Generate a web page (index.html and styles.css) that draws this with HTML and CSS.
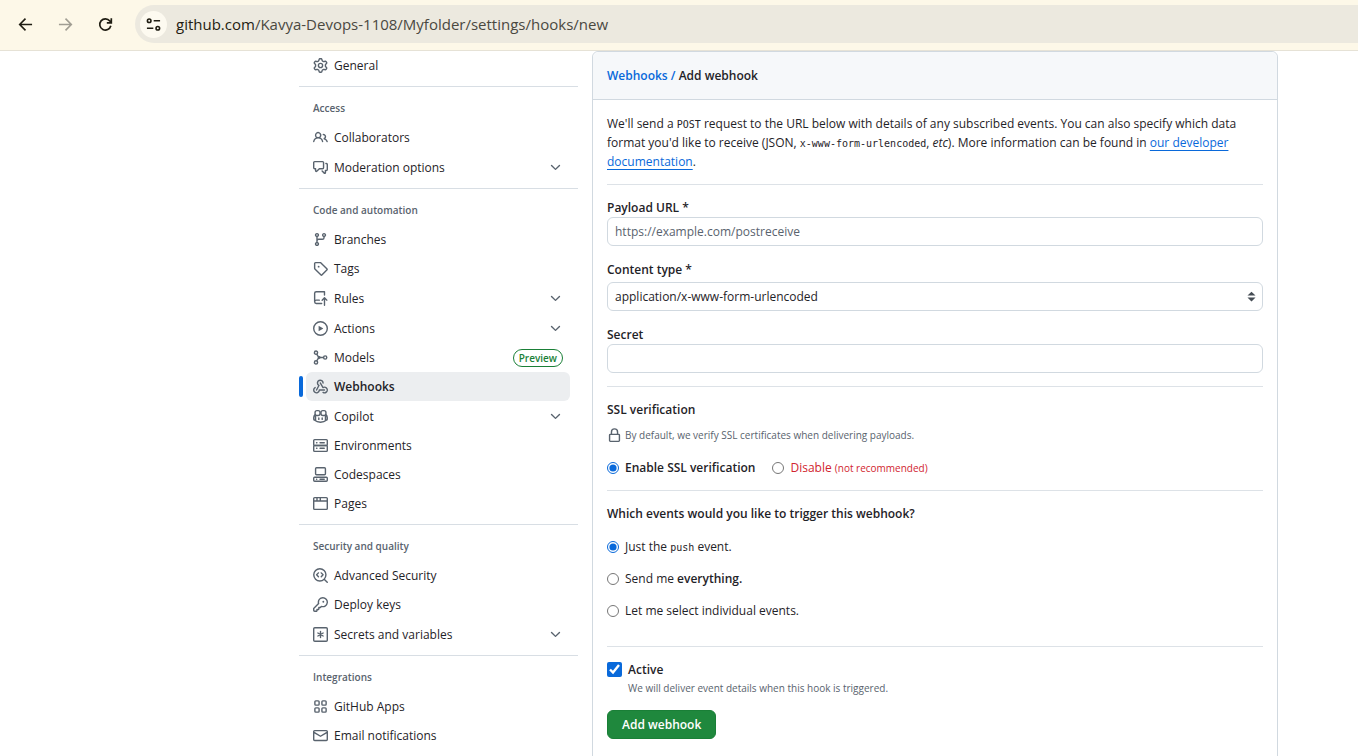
FILE: index.html
```html
<!DOCTYPE html>
<html lang="en">
<head>
    <meta charset="UTF-8">
    <meta name="viewport" content="width=device-width, initial-scale=1.0">
    <title>Add webhook</title>
    <link rel="stylesheet" href="styles.css">
</head>
<body>

    <!-- Icon sprite -->
    <svg class="sprite" aria-hidden="true">
        <symbol id="i-gear" viewBox="0 0 16 16"><path d="M8 0a8.2 8.2 0 0 1 .701.031C9.444.095 9.99.645 10.16 1.29l.288 1.107c.018.066.079.158.212.224.231.114.454.243.668.386.123.082.233.09.299.071l1.103-.303c.644-.176 1.392.021 1.82.63.27.385.506.792.704 1.218.315.675.111 1.422-.364 1.891l-.814.806c-.049.048-.098.147-.088.294.016.257.016.515 0 .772-.01.147.038.246.088.294l.814.806c.475.469.679 1.216.364 1.891a7.977 7.977 0 0 1-.704 1.217c-.428.61-1.176.807-1.82.63l-1.102-.302c-.067-.019-.177-.011-.3.071a5.909 5.909 0 0 1-.668.386c-.133.066-.194.158-.211.224l-.29 1.106c-.168.646-.715 1.196-1.458 1.26a8.006 8.006 0 0 1-1.402 0c-.743-.064-1.289-.614-1.458-1.26l-.289-1.106c-.018-.066-.079-.158-.212-.224a5.738 5.738 0 0 1-.668-.386c-.123-.082-.233-.09-.299-.071l-1.103.303c-.644.176-1.392-.021-1.82-.63a8.12 8.12 0 0 1-.704-1.218c-.315-.675-.111-1.422.363-1.891l.815-.806c.05-.048.098-.147.088-.294a6.214 6.214 0 0 1 0-.772c.01-.147-.038-.246-.088-.294l-.815-.806C.635 6.045.431 5.298.746 4.623a7.92 7.92 0 0 1 .704-1.217c.428-.61 1.176-.807 1.82-.63l1.102.302c.067.019.177.011.3-.071.214-.143.437-.272.668-.386.133-.066.194-.158.211-.224l.29-1.106C6.009.645 6.556.095 7.299.03 7.53.01 7.764 0 8 0Zm-.571 1.525c-.036.003-.108.036-.137.146l-.289 1.105c-.147.561-.549.967-.998 1.189-.173.086-.34.183-.5.29-.417.278-.97.423-1.529.27l-1.103-.303c-.109-.03-.175.016-.195.045-.22.312-.412.644-.573.99-.014.031-.021.11.059.19l.815.806c.411.406.562.957.53 1.456a4.709 4.709 0 0 0 0 .582c.032.499-.119 1.05-.53 1.456l-.815.806c-.081.08-.073.159-.059.19.162.346.353.677.573.989.02.03.085.076.195.046l1.102-.303c.56-.153 1.113-.008 1.53.27.161.107.328.204.501.29.447.222.85.629.997 1.189l.289 1.105c.029.109.101.143.137.146a6.6 6.6 0 0 0 1.142 0c.036-.003.108-.036.137-.146l.289-1.105c.147-.561.549-.967.998-1.189.173-.086.34-.183.5-.29.417-.278.97-.423 1.529-.27l1.103.303c.109.029.175-.016.195-.045.22-.313.411-.644.573-.99.014-.031.021-.11-.059-.19l-.815-.806c-.411-.406-.562-.957-.53-1.456a4.709 4.709 0 0 0 0-.582c-.032-.499.119-1.05.53-1.456l.815-.806c.081-.08.073-.159.059-.19a6.464 6.464 0 0 0-.573-.989c-.02-.03-.085-.076-.195-.046l-1.102.303c-.56.153-1.113.008-1.53-.27a4.44 4.44 0 0 0-.501-.29c-.447-.222-.85-.629-.997-1.189l-.289-1.105c-.029-.11-.101-.143-.137-.146a6.6 6.6 0 0 0-1.142 0ZM11 8a3 3 0 1 1-6 0 3 3 0 0 1 6 0ZM9.5 8a1.5 1.5 0 1 0-3.001.001A1.5 1.5 0 0 0 9.5 8Z"/></symbol>
        <symbol id="i-people" viewBox="0 0 16 16"><path d="M2 5.5a3.5 3.5 0 1 1 5.898 2.549 5.508 5.508 0 0 1 3.034 4.084.75.75 0 1 1-1.482.235 4 4 0 0 0-7.9 0 .75.75 0 0 1-1.482-.236A5.507 5.507 0 0 1 3.102 8.05 3.493 3.493 0 0 1 2 5.5ZM11 4a3.001 3.001 0 0 1 2.22 5.018 5.01 5.01 0 0 1 2.56 3.012.749.749 0 0 1-.885.954.752.752 0 0 1-.549-.514 3.507 3.507 0 0 0-2.522-2.372.75.75 0 0 1-.574-.73v-.352a.75.75 0 0 1 .416-.672A1.5 1.5 0 0 0 11 5.5.75.75 0 0 1 11 4Zm-5.5-.5a2 2 0 1 0-.001 3.999A2 2 0 0 0 5.5 3.5Z"/></symbol>
        <symbol id="i-discussion" viewBox="0 0 16 16"><path d="M1.75 1h8.5c.966 0 1.75.784 1.75 1.75v5.5A1.75 1.75 0 0 1 10.25 10H7.061l-2.574 2.573A1.458 1.458 0 0 1 2 11.543V10h-.25A1.75 1.75 0 0 1 0 8.25v-5.5C0 1.784.784 1 1.75 1ZM1.5 2.75v5.5c0 .138.112.25.25.25h1a.75.75 0 0 1 .75.75v2.19l2.72-2.72a.749.749 0 0 1 .53-.22h3.5a.25.25 0 0 0 .25-.25v-5.5a.25.25 0 0 0-.25-.25h-8.5a.25.25 0 0 0-.25.25Zm13 2a.25.25 0 0 0-.25-.25h-.5a.75.75 0 0 1 0-1.5h.5c.966 0 1.75.784 1.75 1.75v5.5A1.75 1.75 0 0 1 14.25 12H14v1.543a1.458 1.458 0 0 1-2.487 1.03L9.22 12.28a.749.749 0 0 1 .326-1.275.749.749 0 0 1 .734.215l2.22 2.22v-2.19a.75.75 0 0 1 .75-.75h1a.25.25 0 0 0 .25-.25Z"/></symbol>
        <symbol id="i-branch" viewBox="0 0 16 16"><path d="M9.5 3.25a2.25 2.25 0 1 1 3 2.122V6A2.5 2.5 0 0 1 10 8.5H6a1 1 0 0 0-1 1v1.128a2.251 2.251 0 1 1-1.5 0V5.372a2.25 2.25 0 1 1 1.5 0v1.836A2.493 2.493 0 0 1 6 7h4a1 1 0 0 0 1-1v-.628A2.25 2.25 0 0 1 9.5 3.25Zm-6 0a.75.75 0 1 0 1.5 0 .75.75 0 0 0-1.5 0Zm8.25-.75a.75.75 0 1 0 0 1.5.75.75 0 0 0 0-1.5ZM4.25 12a.75.75 0 1 0 0 1.5.75.75 0 0 0 0-1.5Z"/></symbol>
        <symbol id="i-tag" viewBox="0 0 16 16"><path d="M1 7.775V2.75C1 1.784 1.784 1 2.75 1h5.025c.464 0 .91.184 1.238.513l6.25 6.25a1.75 1.75 0 0 1 0 2.474l-5.026 5.026a1.75 1.75 0 0 1-2.474 0l-6.25-6.25A1.752 1.752 0 0 1 1 7.775Zm1.5 0c0 .066.026.13.073.177l6.25 6.25a.25.25 0 0 0 .354 0l5.025-5.025a.25.25 0 0 0 0-.354l-6.25-6.25a.25.25 0 0 0-.177-.073H2.75a.25.25 0 0 0-.25.25ZM6 5a1 1 0 1 1 0 2 1 1 0 0 1 0-2Z"/></symbol>
        <symbol id="i-rules" viewBox="0 0 16 16"><path d="M1 2.5A2.5 2.5 0 0 1 3.5 0h8.75a.75.75 0 0 1 .75.75v3.5a.75.75 0 0 1-1.5 0V1.5h-8a1 1 0 0 0-1 1v6.708A2.493 2.493 0 0 1 3.5 9h3.25a.75.75 0 0 1 0 1.5H3.5a1 1 0 0 0 0 2h5.75a.75.75 0 0 1 0 1.5H3.5A2.5 2.5 0 0 1 1 11.5Zm13.23 7.79-1.225-1.224v6.184a.75.75 0 0 1-1.5 0V9.066L10.28 10.29a.75.75 0 0 1-1.06-1.061l2.505-2.504a.75.75 0 0 1 1.06 0L15.29 9.23a.751.751 0 0 1-.018 1.042.751.751 0 0 1-1.042.018Z"/></symbol>
        <symbol id="i-play" viewBox="0 0 16 16"><path d="M8 0a8 8 0 1 1 0 16A8 8 0 0 1 8 0ZM1.5 8a6.5 6.5 0 1 0 13 0 6.5 6.5 0 0 0-13 0Zm4.879-2.773 4.264 2.559a.25.25 0 0 1 0 .428l-4.264 2.559A.25.25 0 0 1 6 10.559V5.442a.25.25 0 0 1 .379-.215Z"/></symbol>
        <symbol id="i-models" viewBox="0 0 16 16"><g fill="none" stroke="currentColor" stroke-width="1.5"><circle cx="3.2" cy="2.8" r="1.7"/><circle cx="3.2" cy="13.2" r="1.7"/><circle cx="13" cy="8" r="1.7"/><path d="M3.9 4.4 6.3 8l-2.4 3.6M6.3 8h5"/></g><circle cx="6.6" cy="8" r="1.5"/></symbol>
        <symbol id="i-webhook" viewBox="0 0 16 16"><path d="M5.5 4.25a2.25 2.25 0 0 1 4.5 0 .75.75 0 0 0 1.5 0 3.75 3.75 0 1 0-6.14 2.889l-2.272 4.258a.75.75 0 0 0 1.324.706L7 7.25a.75.75 0 0 0-.309-1.015A2.25 2.25 0 0 1 5.5 4.25Z"/><path d="M7.364 3.607a.75.75 0 0 1 1.03.257l2.608 4.349a3.75 3.75 0 1 1-.628 6.785.75.75 0 0 1 .752-1.299 2.25 2.25 0 1 0-.033-3.88.75.75 0 0 1-1.03-.256L7.107 4.636a.75.75 0 0 1 .257-1.03Z"/><path d="M2.9 8.776A.75.75 0 0 1 2.625 9.8 2.25 2.25 0 1 0 6 11.75a.75.75 0 0 1 .75-.751h5.5a.75.75 0 0 1 0 1.5H7.425a3.751 3.751 0 1 1-5.55-3.998.75.75 0 0 1 1.024.274Z"/></symbol>
        <symbol id="i-copilot" viewBox="0 0 16 16"><g fill="none" stroke="currentColor" stroke-width="1.5"><rect x="2.2" y="1.7" width="5.3" height="5.2" rx="2"/><rect x="8.5" y="1.7" width="5.3" height="5.2" rx="2"/><path d="M2.4 6C1.3 7 .8 8 .8 9v1.6c0 .5.2.9.6 1.2C3.2 13.3 5.4 14.2 8 14.2s4.8-.9 6.6-2.4c.4-.3.6-.7.6-1.2V9c0-1-.5-2-1.6-3M2.7 7v5.5M13.3 7v5.5"/><path stroke-linecap="round" d="M6.2 9.6v1.5M9.8 9.6v1.5"/></g></symbol>
        <symbol id="i-server" viewBox="0 0 16 16"><g fill="none" stroke="currentColor" stroke-width="1.5"><rect x=".75" y="1.75" width="14.5" height="6.25" rx="1"/><rect x=".75" y="8" width="14.5" height="6.25" rx="1"/><path stroke-linecap="round" d="M3.8 5h.4M7.5 5h4.5M3.8 11h.4M7.5 11h4.5"/></g></symbol>
        <symbol id="i-codespaces" viewBox="0 0 16 16"><g fill="none" stroke="currentColor" stroke-width="1.5"><rect x="2.75" y=".75" width="10.5" height="7.5" rx="1"/><rect x=".75" y="11" width="14.5" height="4.2" rx="1"/><path stroke-linecap="round" d="M3.8 13h.2M7.5 13h4.5"/></g></symbol>
        <symbol id="i-browser" viewBox="0 0 16 16"><path d="M0 2.75C0 1.784.784 1 1.75 1h12.5c.966 0 1.75.784 1.75 1.75v10.5A1.75 1.75 0 0 1 14.25 15H1.75A1.75 1.75 0 0 1 0 13.25ZM14.5 6h-13v7.25c0 .138.112.25.25.25h12.5a.25.25 0 0 0 .25-.25Zm-6-3.5v2h6V2.75a.25.25 0 0 0-.25-.25ZM5 2.5v2h2v-2Zm-3.25 0a.25.25 0 0 0-.25.25V4.5h2v-2Z"/></symbol>
        <symbol id="i-codescan" viewBox="0 0 16 16"><g fill="none" stroke="currentColor" stroke-width="1.5" stroke-linecap="round" stroke-linejoin="round"><circle cx="7.3" cy="7.3" r="6.5"/><path d="m12.2 12.2 3 3M5.8 5.2 3.9 7.3l1.9 2.1M8.8 5.2l1.9 2.1-1.9 2.1"/></g></symbol>
        <symbol id="i-key" viewBox="0 0 16 16"><path d="M10.5 0a5.499 5.499 0 1 1-1.288 10.848l-.932.932a.749.749 0 0 1-.53.22H7v.75a.749.749 0 0 1-.22.53l-.5.5a.749.749 0 0 1-.53.22H5v.75a.749.749 0 0 1-.22.53l-.5.5a.749.749 0 0 1-.53.22h-2A1.75 1.75 0 0 1 0 14.25v-2c0-.199.079-.389.22-.53l4.932-4.932A5.5 5.5 0 0 1 10.5 0Zm-4 5.5c-.001.431.069.86.205 1.269a.75.75 0 0 1-.181.768L1.5 12.56v1.69c0 .138.112.25.25.25h1.69l.06-.06v-1.19a.75.75 0 0 1 .75-.75h1.19l.06-.06v-1.19a.75.75 0 0 1 .75-.75h1.19l1.023-1.025a.75.75 0 0 1 .768-.18A4 4 0 1 0 6.5 5.5ZM11 6a1 1 0 1 1 0-2 1 1 0 0 1 0 2Z"/></symbol>
        <symbol id="i-asterisk" viewBox="0 0 16 16"><g fill="none" stroke="currentColor" stroke-width="1.5"><rect x=".75" y=".75" width="14.5" height="14.5" rx="1.2"/><path stroke-linecap="round" d="M8 4.8v6.4M5.2 6.4l5.6 3.2M5.2 9.6l5.6-3.2"/></g></symbol>
        <symbol id="i-apps" viewBox="0 0 16 16"><g fill="none" stroke="currentColor" stroke-width="1.5"><rect x="2" y="2" width="4.5" height="4.5" rx="1"/><rect x="9.5" y="2" width="4.5" height="4.5" rx="1"/><rect x="2" y="9.5" width="4.5" height="4.5" rx="1"/><rect x="9.5" y="9.5" width="4.5" height="4.5" rx="1"/></g></symbol>
        <symbol id="i-mail" viewBox="0 0 16 16"><path d="M1.75 2h12.5c.966 0 1.75.784 1.75 1.75v8.5A1.75 1.75 0 0 1 14.25 14H1.75A1.75 1.75 0 0 1 0 12.25v-8.5C0 2.784.784 2 1.75 2ZM1.5 5.809v6.441c0 .138.112.25.25.25h12.5a.25.25 0 0 0 .25-.25V5.809L8.38 9.397a.75.75 0 0 1-.76 0Zm13-1.741V3.75a.25.25 0 0 0-.25-.25H1.75a.25.25 0 0 0-.25.25v.318L8 7.88Z"/></symbol>
        <symbol id="i-lock" viewBox="0 0 16 16"><g fill="none" stroke="currentColor" stroke-width="1.5"><rect x="2.75" y="6.75" width="10.5" height="7.5" rx=".8"/><path d="M4.75 6.5V4.2a3.25 3.25 0 0 1 6.5 0v2.3"/></g></symbol>
        <symbol id="i-chevron" viewBox="0 0 16 16"><path d="M12.78 5.22a.749.749 0 0 1 0 1.06l-4.25 4.25a.749.749 0 0 1-1.06 0L3.22 6.28a.749.749 0 1 1 1.06-1.06L8 8.939l3.72-3.719a.749.749 0 0 1 1.06 0Z"/></symbol>
        <symbol id="i-updown" viewBox="0 0 16 16"><path d="M8 2.8 12.3 7H3.7ZM8 13.2 12.3 9H3.7Z"/></symbol>
        <symbol id="i-back" viewBox="0 0 16 16"><path fill="none" stroke="currentColor" stroke-width="1.7" d="M15 8H2M8 1.8 1.8 8 8 14.2"/></symbol>
        <symbol id="i-forward" viewBox="0 0 16 16"><path fill="none" stroke="currentColor" stroke-width="1.7" d="M1 8h13M8 1.8 14.2 8 8 14.2"/></symbol>
        <symbol id="i-reload" viewBox="0 0 16 16"><path fill="none" stroke="currentColor" stroke-width="1.8" d="M13.7 9.4A6 6 0 1 1 12.6 4.2L14 5.8M14.2 1.2v5H9.4"/></symbol>
        <symbol id="i-tune" viewBox="0 0 16 16"><g fill="none" stroke="currentColor" stroke-width="1.7"><circle cx="3.4" cy="4" r="1.9"/><path d="M8.2 4H15M1 12h6.8"/><circle cx="12.6" cy="12" r="1.9"/></g></symbol>
    </svg>

    <header class="toolbar">
        <button class="tool-btn" type="button" aria-label="Back"><svg class="icon"><use href="#i-back"/></svg></button>
        <button class="tool-btn disabled" type="button" aria-label="Forward"><svg class="icon"><use href="#i-forward"/></svg></button>
        <button class="tool-btn" type="button" aria-label="Reload"><svg class="icon"><use href="#i-reload"/></svg></button>
        <div class="address-bar">
            <button class="site-info" type="button" aria-label="Site information"><svg class="icon"><use href="#i-tune"/></svg></button>
            <div class="url"><span class="host">github.com</span>/Kavya-Devops-1108/Myfolder/settings/hooks/new</div>
        </div>
    </header>

    <div class="page">
        <nav class="sidebar">
            <ul>
                <li><a href="#"><svg class="icon"><use href="#i-gear"/></svg>General</a></li>
            </ul>

            <h3>Access</h3>
            <ul>
                <li><a href="#"><svg class="icon"><use href="#i-people"/></svg>Collaborators</a></li>
                <li><a href="#" class="has-extra"><svg class="icon"><use href="#i-discussion"/></svg>Moderation options<svg class="icon extra"><use href="#i-chevron"/></svg></a></li>
            </ul>

            <h3>Code and automation</h3>
            <ul>
                <li><a href="#"><svg class="icon"><use href="#i-branch"/></svg>Branches</a></li>
                <li><a href="#"><svg class="icon"><use href="#i-tag"/></svg>Tags</a></li>
                <li><a href="#" class="has-extra"><svg class="icon"><use href="#i-rules"/></svg>Rules<svg class="icon extra"><use href="#i-chevron"/></svg></a></li>
                <li><a href="#" class="has-extra"><svg class="icon"><use href="#i-play"/></svg>Actions<svg class="icon extra"><use href="#i-chevron"/></svg></a></li>
                <li><a href="#"><svg class="icon"><use href="#i-models"/></svg>Models<span class="badge extra">Preview</span></a></li>
                <li class="active"><a href="#" aria-current="page"><svg class="icon"><use href="#i-webhook"/></svg>Webhooks</a></li>
                <li><a href="#" class="has-extra"><svg class="icon"><use href="#i-copilot"/></svg>Copilot<svg class="icon extra"><use href="#i-chevron"/></svg></a></li>
                <li><a href="#"><svg class="icon"><use href="#i-server"/></svg>Environments</a></li>
                <li><a href="#"><svg class="icon"><use href="#i-codespaces"/></svg>Codespaces</a></li>
                <li><a href="#"><svg class="icon"><use href="#i-browser"/></svg>Pages</a></li>
            </ul>

            <h3>Security and quality</h3>
            <ul>
                <li><a href="#"><svg class="icon"><use href="#i-codescan"/></svg>Advanced Security</a></li>
                <li><a href="#"><svg class="icon"><use href="#i-key"/></svg>Deploy keys</a></li>
                <li><a href="#" class="has-extra"><svg class="icon"><use href="#i-asterisk"/></svg>Secrets and variables<svg class="icon extra"><use href="#i-chevron"/></svg></a></li>
            </ul>

            <h3>Integrations</h3>
            <ul>
                <li><a href="#"><svg class="icon"><use href="#i-apps"/></svg>GitHub Apps</a></li>
                <li><a href="#"><svg class="icon"><use href="#i-mail"/></svg>Email notifications</a></li>
            </ul>
        </nav>

        <main class="card">
            <h2 class="card-header"><a href="#">Webhooks /</a> Add webhook</h2>

            <form class="card-body">
                <p>We'll send a <code>POST</code> request to the URL below with details of any subscribed events. You can also specify which data format you'd like to receive (JSON, <code>x-www-form-urlencoded</code>, <em>etc</em>). More information can be found in <a class="doc-link" href="#">our developer documentation</a>.</p>

                <hr>

                <div class="field">
                    <label for="payload-url">Payload URL *</label>
                    <input type="text" id="payload-url" placeholder="https://example.com/postreceive">
                </div>
                <div class="field">
                    <label for="content-type">Content type *</label>
                    <div class="select-wrap">
                        <select id="content-type">
                            <option>application/x-www-form-urlencoded</option>
                            <option>application/json</option>
                        </select>
                        <svg class="icon"><use href="#i-updown"/></svg>
                    </div>
                </div>
                <div class="field">
                    <label for="secret">Secret</label>
                    <input type="text" id="secret">
                </div>

                <hr>

                <h4>SSL verification</h4>
                <p class="note ssl-note"><svg class="icon"><use href="#i-lock"/></svg>By default, we verify SSL certificates when delivering payloads.</p>
                <div class="ssl-options">
                    <label class="choice" for="ssl-on"><input type="radio" id="ssl-on" name="ssl" checked><strong>Enable SSL verification</strong></label>
                    <label class="choice danger" for="ssl-off"><input type="radio" id="ssl-off" name="ssl"><span>Disable <small>(not recommended)</small></span></label>
                </div>

                <hr>

                <h4>Which events would you like to trigger this webhook?</h4>
                <div class="events">
                    <label class="choice" for="ev-push"><input type="radio" id="ev-push" name="events" checked><span>Just the <code>push</code> event.</span></label>
                    <label class="choice" for="ev-all"><input type="radio" id="ev-all" name="events"><span>Send me <strong>everything.</strong></span></label>
                    <label class="choice" for="ev-some"><input type="radio" id="ev-some" name="events"><span>Let me select individual events.</span></label>
                </div>

                <hr>

                <div class="active-field">
                    <label class="choice" for="active"><input type="checkbox" id="active" checked><strong>Active</strong></label>
                    <p class="note">We will deliver event details when this hook is triggered.</p>
                </div>

                <button class="submit-btn" type="button">Add webhook</button>
            </form>
        </main>
    </div>

</body>
</html>
```

FILE: styles.css
```css
* {
    box-sizing: border-box;
}

body {
    margin: 0;
    height: 100vh;
    display: flex;
    flex-direction: column;
    background-color: #fff;
    color: #1f2328;
    font-family: "Open Sans", "Noto Sans", sans-serif;
    font-size: 12px;
    line-height: 19px;
}

ul, h2, h3, h4, p {
    margin: 0;
    padding: 0;
    font-size: 12px;
    font-weight: 600;
}

p {
    font-weight: 400;
}

ul {
    list-style: none;
    font-weight: 400;
}

a {
    color: #0969da;
    text-decoration: none;
}

strong {
    font-weight: 600;
}

code {
    font-family: "DejaVu Sans Mono", monospace;
    font-size: 10px;
    line-height: 1;
}

button, input, select {
    font: inherit;
    color: inherit;
}

.sprite {
    display: none;
}

.icon {
    width: 15px;
    height: 15px;
    flex: none;
    fill: currentColor;
}

/* Browser toolbar */
.toolbar {
    display: flex;
    align-items: center;
    flex: none;
    padding: 5px 0 7px 9px;
    background-color: #fdf8e8;
    border-bottom: 1px solid #e6e2d6;
}

.tool-btn {
    display: flex;
    justify-content: center;
    align-items: center;
    width: 32px;
    height: 32px;
    margin-right: 8px;
    padding: 0;
    border: none;
    border-radius: 50%;
    background: none;
    color: #1f1d12;
}

.tool-btn.disabled {
    color: #a09d92;
}

.address-bar {
    display: flex;
    align-items: center;
    flex: 1;
    height: 38px;
    margin-left: 6px;
    padding-left: 5px;
    border-radius: 19px 0 0 19px;
    background-color: #ece9df;
}

.site-info {
    display: flex;
    justify-content: center;
    align-items: center;
    width: 27px;
    height: 27px;
    padding: 0;
    border: none;
    border-radius: 50%;
    background-color: #fdfaf0;
    color: #1f1d12;
}

.url {
    margin-left: 9px;
    font-size: 15px;
    color: #4a483f;
}

.host {
    color: #1f1d12;
}

/* Page layout */
.page {
    display: flex;
    align-items: flex-start;
    flex: 1;
    gap: 14px;
    padding: 0 80px 0 299px;
    overflow-y: auto;
    scrollbar-width: none;
}

/* Settings menu */
.sidebar {
    flex: none;
    width: 279px;
}

.sidebar h3 {
    margin-top: 6px;
    padding: 12px 14px 6px;
    border-top: 1px solid #d8dee4;
    font-size: 10px;
    line-height: 18px;
    color: #59636e;
}

.sidebar li {
    position: relative;
    padding: 0 8px 0 7px;
}

.sidebar a {
    display: flex;
    align-items: center;
    gap: 6px;
    padding: 5px 7px;
    border-radius: 6px;
    color: #1f2328;
}

.sidebar a.has-extra {
    min-height: 30px;
}

.sidebar .icon {
    color: #59636e;
}

.sidebar .extra {
    margin-left: auto;
}

.sidebar .active a {
    background-color: #eceef0;
    font-weight: 600;
}

.sidebar .active::before {
    content: "";
    position: absolute;
    top: 4px;
    bottom: 4px;
    left: 0;
    width: 4px;
    border-radius: 6px;
    background-color: #0969da;
}

.badge {
    padding: 0 5px;
    border: 1px solid #1a7f37;
    border-radius: 10px;
    font-size: 10px;
    font-weight: 600;
    line-height: 16px;
    color: #1a7f37;
}

/* Webhook form */
.card {
    flex: 1;
    min-width: 0;
    border: 1px solid #d1d9e0;
    border-radius: 6px;
}

.card-header {
    padding: 14px;
    border-bottom: 1px solid #d1d9e0;
    border-radius: 6px 6px 0 0;
    background-color: #f6f8fa;
}

.card-body {
    padding: 14px 14px 28px;
}

.doc-link {
    text-decoration: underline;
    text-decoration-thickness: 1px;
    text-decoration-skip-ink: none;
    text-underline-offset: 3px;
}

hr {
    height: 1px;
    margin: 13px 0;
    border: none;
    background-color: #dde2e7;
}

.field + .field {
    margin-top: 14px;
}

.field label {
    display: block;
    font-weight: 600;
}

.field input,
.field select {
    display: block;
    width: 100%;
    height: 29px;
    padding: 0 7px;
    border: 1px solid #d1d9e0;
    border-radius: 6px;
    background-color: #fff;
}

.field input::placeholder {
    color: #59636e;
}

.field select {
    appearance: none;
}

.select-wrap {
    position: relative;
    padding-top: 3px;
}

.select-wrap .icon {
    position: absolute;
    right: 4px;
    bottom: 7px;
    color: #454c54;
    pointer-events: none;
}

.note {
    font-size: 10px;
    color: #59636e;
}

.ssl-note {
    display: flex;
    align-items: center;
    gap: 3px;
    margin-top: 7px;
}

.ssl-options {
    display: flex;
    gap: 17px;
    margin-top: 13px;
}

.choice {
    display: flex;
    align-items: center;
    gap: 6px;
}

.choice input {
    width: 12px;
    height: 12px;
    margin: 0;
    accent-color: #0969da;
}

.choice small {
    font-size: 10px;
    line-height: 1;
}

.danger {
    color: #d1242f;
}

.events {
    display: flex;
    flex-direction: column;
    align-items: flex-start;
    gap: 13px;
    padding: 14px 0 13px;
}

.active-field .choice input {
    width: 15px;
    height: 15px;
}

.active-field .note {
    padding-left: 21px;
}

.submit-btn {
    display: block;
    height: 29px;
    margin-top: 12px;
    padding: 0 14px;
    border: 1px solid #1a7f37;
    border-radius: 6px;
    background-color: #1f883d;
    color: #fff;
    font-weight: 600;
}
```
